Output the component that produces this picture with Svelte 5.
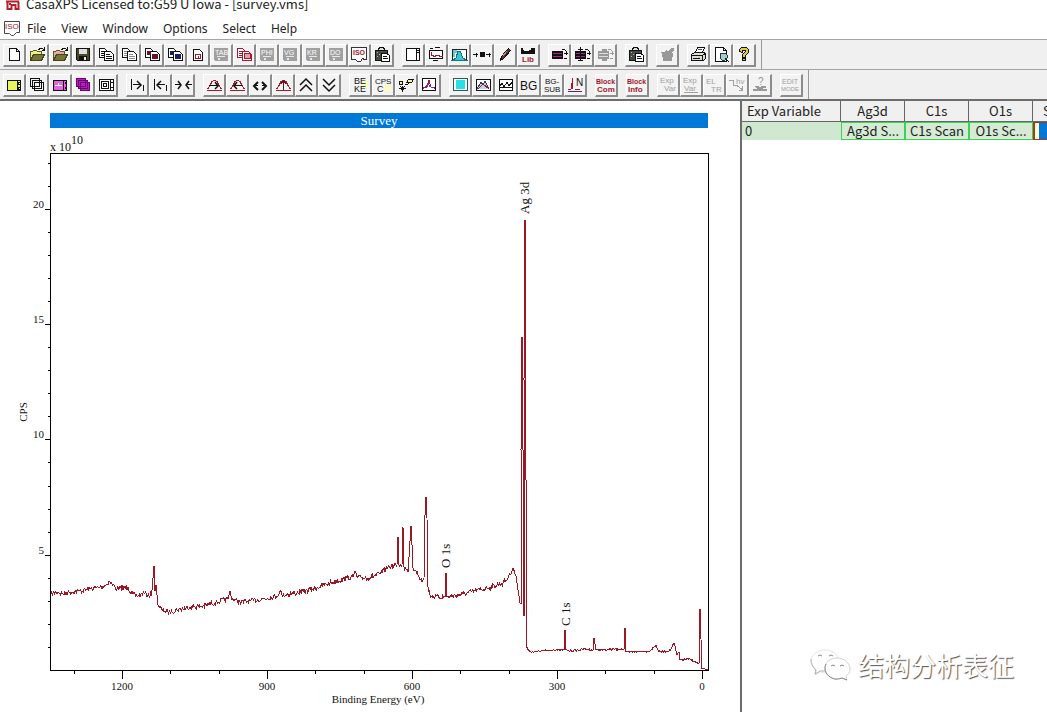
<!-- App.svelte -->
<script lang="ts">
    type Shape = [d: string, fill?: string, stroke?: string, width?: number];
    type Label = [x: number, y: number, text: string, color?: string, size?: number];
    type Tool = {
        name: string;
        shapes?: Shape[];
        labels?: Label[];
        disabled?: boolean;
    };

    const K = '#111';
    const G = '#a0a0a0';
    const R = '#a3182c';
    const M = '#c813c8';
    const C = '#25e0e8';

    const menus = ['File', 'View', 'Window', 'Options', 'Select', 'Help'];

    const pages = (fill: string, stroke = K): Shape[] => [
        ['M3.5 2.5h5l2 2v7h-7z', '#fff', stroke],
        ['M8.5 5.5h6l3 3v6h-9z', '#fff', stroke],
        ['M5 5h3v1h-3zM5 7h3v1h-3zM5 9h3v1h-3zM10 8h4v1h-4zM10 10h6v1h-6zM10 12h6v1h-6z', fill]
    ];
    const blocks = (fill: string): Shape[] => [
        ['M3.5 2.5h5l2 2v7h-7z', '#fff', K],
        ['M8.5 5.5h6l3 3v6h-9z', '#fff', K],
        ['M5 5h4v4h-4zM10 8h6v5h-6z', fill]
    ];
    const folder = (fill: string): Shape[] => [
        ['M3.5 13.5v-8h2l1-1h3l1 1h4v3', fill, '#5b5b20'],
        ['M3.5 14.5l3-6h11l-3 6z', '#77743a', '#45431c'],
        ['M11.5 3.5l2-1h2l2 2M17.5 1v4M15 4.5h3', 'none', K]
    ];
    const savedAs = (name: string, text: string): Tool => ({
        name,
        disabled: true,
        shapes: [['M3 2h14v13h-13l-1-1z', G], ['M6 10h8v1h-8zM7 12h2v2h-2z', '#e8e8e8']],
        labels: [[4, 9, text, '#fff', 7]]
    });
    const clipboard: Shape[] = [
        ['M3 4h12v10h-12z', '#444a40', K],
        ['M6 4v-2h1v-1h4v1h1v2z', '#ddd', K],
        ['M5 6h1v1h-1zM7 8h1v1h-1zM5 10h1v1h-1z', '#bbb'],
        ['M9.5 7.5h5l3 2v6h-8z', '#fff', K],
        ['M11 10h4v1h-4zM11 12h5v1h-5z', K]
    ];
    const film = (fill: string, edge = K): Shape[] => [
        ['M3 5h11v8h-11z', edge],
        ['M4 7h9v1h-9zM4 10h9v1h-9z', fill],
        ['M12.5 3.5h3l2 2v3M15 7.5h4M14.5 12.5h3', 'none', edge]
    ];
    const tile = (fill: string): Shape[] => [
        ['M3.5 4.5h13v10h-13z', fill, K],
        ['M13.5 4.5v10', 'none', K],
        ['M14 6h2v2h-2zM14 11h2v2h-2z', '#fff', K]
    ];
    const stack = (fill: string, edge: string): Shape[] => [
        ['M3.5 2.5h9v8h-9z', fill],
        ['M5.5 4.5h9v8h-9z', fill],
        ['M7.5 6.5h9v8h-9z', fill],
        ['M3.5 2.5h9v8h-9zM5.5 4.5h9v8h-9zM7.5 6.5h9v8h-9z', 'none', edge]
    ];

    const fileBar: Tool[][] = [
        [
            { name: 'New', shapes: [['M5.5 2.5h7l3 3v9h-10z', '#fff', K], ['M12.5 2.5v3h3', 'none', K]] },
            { name: 'Open', shapes: folder('#eeee8c') },
            { name: 'Convert', shapes: folder('#e4a9a9') },
            {
                name: 'Save',
                shapes: [
                    ['M3.5 2.5h13v12h-12l-1-1z', '#4b4a28', K],
                    ['M6 3h8v5h-8z', '#ddd'],
                    ['M6 10h8v4h-8z', '#111'],
                    ['M11 11h2v3h-2z', '#eee']
                ]
            },
            { name: 'Copy', shapes: pages(K) },
            { name: 'Copy text', shapes: pages('#888') },
            { name: 'Copy block', shapes: blocks('#611723') },
            { name: 'Copy tile', shapes: blocks('#15205f') },
            { name: 'Copy page', shapes: [['M5.5 3.5h6l3 3v8h-9z', '#fff', K], ['M7.5 8.5h5v4h-5zM9.5 10.5h1v1', 'none', R]] },
            savedAs('Save TAB', 'TAB'),
            { name: 'Copy table', shapes: [...pages(R, R), ['M10 7h6v5h-6z', '#dca0a8', R]] },
            savedAs('Save PHI', 'PHI'),
            savedAs('Save VG', 'VG'),
            savedAs('Save KR', 'KR'),
            savedAs('Save data', 'DO'),
            { name: 'ISO', shapes: [['M2.5 1.5h15v12h-2l-2-1-2 3h-3l-2-2h-4z', '#fff', '#333']], labels: [[4, 9, 'ISO', R, 7]] },
            { name: 'Paste', shapes: clipboard }
        ],
        [
            { name: 'Window', shapes: [['M3.5 2.5h13v12h-13z', '#fff', K], ['M13.5 2.5v12M13.5 6.5h3', 'none', K], ['M14 4h2v1h-2z', K]] },
            { name: 'Region view', shapes: [['M3.5 4.5h13v8h-13z', '#fff', K], ['M5.5 6v3l2 1h2l2-1h2v1h3', 'none', R], ['M4 2.5h3M9 1.5h5M7 14.5h5', 'none', K]] },
            { name: 'Peak fill', shapes: [['M3.5 3.5h14v11h-14z', '#fff', '#222'], ['M4 14l3-2 2-7h2l3 7 3 2z', '#3cc6d3', '#177'], ['M4 4h4v3h-2v4h-2z', '#67cbd7']] },
            { name: 'Step', shapes: [['M8 6h5v5h-5z', K], ['M1 8.5h5M4.5 6.5v4M14 8.5h5M17.5 6.5v4', 'none', K]] },
            { name: 'Edit', shapes: [['M13.5 2.5l2 2-7 8-3 2 1-4z', '#5c3030', K], ['M11.5 5.5l-4 5', 'none', '#c98080']] },
            { name: 'Library', shapes: [['M3 2h2v2h1v1h5v-1h2v-2h4v6h-14z', K], ['M3 7h14v1h-14z', K]], labels: [[4, 16, 'Lib', R, 8]] }
        ],
        [
            { name: 'Overlay', shapes: film('#a52b90') },
            { name: 'Overlay all', shapes: [...film('#a52b90'), ['M8.5 1v14M6 3.5h5M6 14.5h5', 'none', K]] },
            { name: 'Overlay off', disabled: true, shapes: [...film('#ddd', '#999'), ['M7 3h5v2h-5zM7 13h5v2h-5z', '#999']] }
        ],
        [{ name: 'Clipboard', shapes: clipboard }],
        [{ name: 'Bin', disabled: true, shapes: [['M5 7h11l-1 8h-9z', '#999'], ['M4 6h3l2-2 2 2 3-4h3v2l-2 3h-11z', '#999']] }],
        [
            {
                name: 'Print',
                shapes: [
                    ['M7.5 6.5l2-5h7l-2 5z', '#fff', K],
                    ['M3.5 8.5l3-2h10l1 2v4l-2 2h-12z', '#ddd', K],
                    ['M3.5 9.5h11v5M14.5 9.5l3-2M5 12.5h7', 'none', K],
                    ['M10 3h4v1h-4z', '#555'],
                    ['M10 11h2v1h-2z', '#cccb20']
                ]
            },
            {
                name: 'Print preview',
                shapes: [
                    ['M4.5 1.5h8l3 3v11h-11z', '#fff', K],
                    ['M12.5 1.5v3h3', 'none', K],
                    ['M10 7h4l2 2v3l-2 2h-3l-2-2v-3z', '#9ccfd5', '#333'],
                    ['M14 12l4 4', 'none', K]
                ]
            },
            {
                name: 'Help',
                shapes: [
                    ['M5.5 5.5v-2l2-2h5l2 2v3l-3 3v2h-3v-3l3-3v-1h-3v2z', '#dcd23b', K],
                    ['M8.5 12.5h3v2h-3z', '#dcd23b', K]
                ]
            }
        ]
    ];

    const hump = 'M3 12.5h1l2-3 2-4 2-1h1l2 1 2 4 2 3h1';
    const viewBar: Tool[][] = [
        [
            { name: 'One tile', shapes: tile('#eaf75c') },
            { name: 'Cascade', shapes: stack('none', K) },
            { name: 'Tile row', shapes: [['M3.5 4.5h13v10h-13z', '#e266e2', K], ['M13 5h1v9h-1zM15 6h1v2h-1zM15 11h1v2h-1z', K], ['M5 9h7v1h-7zM8 7h1v2h-1z', '#fff']] },
            { name: 'Stack', shapes: stack(M, '#5c0a6b') },
            { name: 'Nested', shapes: [['M3.5 3.5h14v11h-14z', '#fff', K], ['M5.5 5.5h7v7h-7zM7.5 7.5h3v3h-3zM14.5 4v10M15 6.5h2M15 11.5h2', 'none', K]] }
        ],
        [
            { name: 'Zoom right', shapes: [['M4.5 3v11M6 8.5h8M16.5 9v6', 'none', K], ['M10 5l4 4-4 4', 'none', K, 1.5]] },
            { name: 'Zoom left', shapes: [['M4.5 3v11M7 8.5h8M16.5 9v6', 'none', K], ['M11 5l-4 4 4 4', 'none', K, 1.5]] },
            { name: 'Zoom in', shapes: [['M2 8.5h6M19 8.5h-6', 'none', K], ['M5 5l3 4-3 4M16 5l-3 4 3 4', 'none', K, 1.5]] }
        ],
        [
            { name: 'Shift right', shapes: [[hump, 'none', R], ['M3 14.5h15', 'none', R], ['M5 9.5h9', 'none', K], ['M11 6l3 4-3 3', 'none', K, 1.5]] },
            { name: 'Shift left', shapes: [[hump, 'none', R], ['M3 14.5h15', 'none', R], ['M7 9.5h8', 'none', K], ['M10 6l-3 4 3 3', 'none', K, 1.5]] },
            { name: 'Widen', shapes: [['M8 6l-4 4 4 4M12 6l4 4-4 4', 'none', K, 2], ['M4 9.5h4M12 9.5h4', 'none', K]] },
            { name: 'Raise', shapes: [[hump, 'none', R], ['M3 14.5h15', 'none', R], ['M10.5 14v-9M7.5 8.5l3-4 3 4', 'none', '#641724']] },
            { name: 'Up', shapes: [['M4 9l6-6 6 6M4 15l6-6 6 6', 'none', K, 1.5]] },
            { name: 'Down', shapes: [['M4 3l6 6 6-6M4 9l6 6 6-6', 'none', K, 1.5]] }
        ],
        [
            { name: 'BE KE', shapes: [['M12 5h6v7h-6z', '#fbfac1']], labels: [[4, 8, 'BE', K, 9], [4, 16, 'KE', K, 9]] },
            { name: 'CPS', shapes: [['M11 9h7v6h-7z', '#fbfac1']], labels: [[2, 8, 'CPS', K, 8], [4, 16, 'C', K, 9]] },
            { name: 'Markers', shapes: [['M3.5 5.5h3v3h-3zM10.5 6.5l2-3h5l-2 3zM8.5 8.5h3l2-2', '#f6f3a2', K], ['M6.5 10v6M3 12.5h7M4.5 10.5l4 4M8.5 10.5l-4 4', 'none', K]] },
            { name: 'Peaks', shapes: [['M3.5 2.5h13v12h-13z', '#fff', K], ['M4 12l4-1 2-7 2 7 4 1', 'none', R], ['M4 12.5l3-2 2-3 2 3 5 2', 'none', '#6838a0']] }
        ],
        [
            { name: 'Display', shapes: [['M3.5 2.5h14v12h-14z', '#fff', '#265b5b'], ['M6 4h9v9h-9z', C]] },
            { name: 'Overlay peaks', shapes: [['M3.5 3.5h14v11h-14z', '#fff', K], ['M4 13l4-7 2 3 2-4 4 8', '#bcdadf', '#273b70'], ['M5 13l5-5 6 5', 'none', R]] },
            { name: 'Noise', shapes: [['M3.5 3.5h13v11h-13z', '#fff', K], ['M4 9.5l2-2 2 3 3-4 2 3 3-3M4 11.5h12', 'none', K]] },
            { name: 'BG', labels: [[1, 14, 'BG', K, 12]] },
            { name: 'BG-SUB', labels: [[3, 8, 'BG-', K, 8], [2, 16, 'SUB', K, 8]] },
            { name: 'Normalise', shapes: [['M3 15.5h14', 'none', '#4b287d'], ['M3 13.5h3M7.5 13v-11M6.5 13v-6M9.5 13.5h5', 'none', R]], labels: [[11, 10, 'N', K, 10]] }
        ],
        [{ name: 'Block Com', labels: [[0, 8, 'Block', R, 7], [1, 16, 'Com', R, 8]] }],
        [{ name: 'Block Info', labels: [[0, 8, 'Block', R, 7], [1, 16, 'Info', R, 8]] }],
        [
            { name: 'Exp Var', disabled: true, labels: [[2, 7, 'Exp', G, 8], [6, 15, 'Var', G, 8]] },
            { name: 'Exp Var line', disabled: true, shapes: [['M3 16.5h14', 'none', G]], labels: [[2, 7, 'Exp', G, 8], [3, 15, 'Var', G, 8]] },
            { name: 'EL TR', disabled: true, labels: [[2, 8, 'EL', G, 8], [7, 16, 'TR', G, 8]] },
            { name: 'hv', disabled: true, shapes: [['M2 4.5h4v5h4l5 4M15.5 10v4h-4', 'none', G]], labels: [[9, 8, 'hv', G, 8]] },
            { name: 'Query', disabled: true, shapes: [['M4 10h4l2 1 2-1h4v2h-3v1h4v2h-14v-2h4v-1h-1z', '#999']], labels: [[8, 9, '?', '#999', 10]] }
        ],
        [{ name: 'Edit mode', disabled: true, labels: [[1, 8, 'EDIT', G, 7], [0, 15, 'MODE', G, 6]] }]
    ];

    // plot frame, in drawing units
    const frame = { left: 50, right: 708, top: 153, bottom: 670 };

    const xOf = (ev: number) => Math.round(702 - ev * 0.4833);
    const yOf = (cps: number) => Math.round(670 - cps * 23.06);

    const xTicks = Array.from({ length: 14 }, (_, i) => i * 100);
    const yTicks = Array.from({ length: 22 }, (_, i) => i + 1);

    const trace: [number, number][] = [
        [51, 594], [58, 592], [62, 594], [70, 592], [80, 591], [90, 589], [100, 587], [106, 585], [109, 581],
        [112, 584], [117, 589], [128, 587], [132, 594], [137, 596], [145, 593], [150, 596], [152, 590], [154, 566],
        [155, 591], [156, 585], [158, 605], [162, 610], [168, 612], [177, 610], [190, 607], [203, 606], [217, 602],
        [228, 599], [230, 591], [232, 599], [240, 602], [250, 601], [263, 599], [277, 596], [280, 591], [282, 595],
        [297, 593], [313, 589], [330, 583], [347, 578], [353, 577], [355, 571], [357, 577], [368, 578], [380, 574],
        [388, 567], [397, 565], [398, 537], [399, 565], [402, 565], [403, 527], [404, 567], [408, 572], [409, 557],
        [411, 526], [412, 545], [413, 568], [417, 571], [422, 582], [424, 578], [425, 515], [426, 497], [427, 518],
        [428, 587], [430, 595], [435, 597], [445, 597], [446, 573], [447, 597], [463, 594], [487, 588], [503, 583],
        [508, 578], [513, 568], [516, 576], [520, 603], [521, 603], [521, 450], [522, 337], [523, 450], [523, 615],
        [524, 615], [524, 380], [525, 220], [526, 480], [526, 645], [528, 650], [531, 652], [553, 650], [564, 650],
        [565, 630], [566, 650], [570, 651], [587, 649], [593, 650], [594, 638], [596, 650], [624, 649], [625, 628],
        [626, 652], [650, 651], [656, 645], [659, 652], [670, 651], [674, 643], [677, 655], [679, 652], [680, 660],
        [690, 659], [699, 664], [700, 609], [702, 669], [708, 670]
    ];

    // adds counting noise along the flat parts and leaves the steep flanks clean
    function withNoise(points: [number, number][]) {
        let seed = 7;
        const random = () => {
            seed = (seed * 16807) % 2147483647;
            return seed / 2147483647 - 0.5;
        };
        const out: string[] = [];
        points.forEach(([x, y], i) => {
            out.push(`${x},${y}`);
            const next = points[i + 1];
            if (!next || Math.abs(next[1] - y) > 12) return;
            const amp = x > 527 ? 1.8 : 5;
            for (let px = x + 0.7; px < next[0] - 0.4; px += 0.7) {
                const base = y + ((next[1] - y) * (px - x)) / (next[0] - x);
                out.push(`${px.toFixed(1)},${(base + random() * amp).toFixed(1)}`);
            }
        });
        return out.join(' ');
    }

    const tracePoints = withNoise(trace);

    const peaks = [
        { label: 'Ag 3d', x: 529, y: 214 },
        { label: 'O 1s', x: 450, y: 568 },
        { label: 'C 1s', x: 570, y: 626 }
    ];

    const columns = ['Ag3d', 'C1s', 'O1s', 'Survey'];
    const scans = ['Ag3d S...', 'C1s Scan', 'O1s Sc...'];
</script>

{#snippet toolbar(groups: Tool[][], label: string)}
    <div class="toolbar" role="toolbar" aria-label={label}>
        {#each groups as group}
            <div class="group">
                {#each group as tool}
                    <button type="button" class="tool" aria-label={tool.name} disabled={tool.disabled}>
                        <svg viewBox="0 0 20 18" width="20" height="18">
                            {#each tool.shapes ?? [] as [d, fill, stroke, width]}
                                <path
                                    {d}
                                    fill={fill ?? 'none'}
                                    stroke={stroke ?? 'none'}
                                    stroke-width={width ?? 1}
                                    shape-rendering={width ? 'auto' : 'crispEdges'}
                                />
                            {/each}
                            {#each tool.labels ?? [] as [x, y, text, color, size]}
                                <text {x} {y} fill={color} font-size={size} class:strong={color === R}>{text}</text>
                            {/each}
                        </svg>
                    </button>
                {/each}
            </div>
        {/each}
    </div>
{/snippet}

<div class="window">
    <header class="title-bar">
        <svg class="app-icon" viewBox="0 0 16 18" width="16" height="18">
            <path d="M2 6.5h13M3.5 7v7h4v-4h4v4h3v-7M6 8v2" fill="none" stroke="#b3202c" stroke-width="2" />
        </svg>
        <span>CasaXPS Licensed to:G59 U Iowa - [survey.vms]</span>
    </header>

    <nav class="menu-bar">
        <svg class="doc-icon" viewBox="0 0 16 17" width="16" height="17">
            <path d="M.5 1.5h15v11h-3l-3 3h-2l-2-2h-5z" fill="#fff" stroke="#444" />
            <text x="1" y="9" font-size="8" fill="#a3182c">ISO</text>
        </svg>
        {#each menus as menu}
            <button type="button" class="menu">{menu}</button>
        {/each}
    </nav>

    {@render toolbar(fileBar, 'File')}
    {@render toolbar(viewBar, 'View')}

    <main class="panes">
        <section class="plot">
            <svg viewBox="0 101 740 611" role="img" aria-label="Survey spectrum">
                <rect x="50" y="113" width="658" height="15" fill="#0078d7" />
                <text class="plot-title" x="379" y="125" text-anchor="middle">Survey</text>

                <text class="scale-label" x="50" y="151">x 10</text>
                <text class="scale-label" x="71" y="144">10</text>

                <g class="axis">
                    <rect
                        x={frame.left + 0.5}
                        y={frame.top + 0.5}
                        width={frame.right - frame.left}
                        height={frame.bottom - frame.top}
                    />
                    {#each xTicks as ev}
                        <path d="M{xOf(ev) + 0.5} {frame.bottom}v{ev % 300 === 0 ? 9 : 4}" />
                    {/each}
                    {#each yTicks as cps}
                        <path d="M{frame.left} {yOf(cps) + 0.5}h{cps % 5 === 0 ? -5 : -2}" />
                    {/each}
                </g>

                {#each xTicks.filter((ev) => ev % 300 === 0) as ev}
                    <text class="tick-label" x={xOf(ev)} y="690" text-anchor="middle">{ev}</text>
                {/each}
                {#each yTicks.filter((cps) => cps % 5 === 0) as cps}
                    <text class="tick-label" x="44" y={yOf(cps) - 1} text-anchor="end">{cps}</text>
                {/each}

                <text class="tick-label" x="378" y="703" text-anchor="middle">Binding Energy (eV)</text>
                <text class="tick-label" transform="translate(27 412) rotate(-90)" text-anchor="middle">CPS</text>

                <polyline class="trace" points={tracePoints} />

                {#each peaks as peak}
                    <text class="peak-label" transform="translate({peak.x} {peak.y}) rotate(-90)">{peak.label}</text>
                {/each}
            </svg>
        </section>

        <section class="browser">
            <table>
                <thead>
                    <tr>
                        <th class="variable">Exp Variable</th>
                        {#each columns as column, i}
                            <th class:clipped={i === columns.length - 1}>{column}</th>
                        {/each}
                    </tr>
                </thead>
                <tbody>
                    <tr>
                        <td class="variable">0</td>
                        {#each scans as scan}
                            <td class="scan">{scan}</td>
                        {/each}
                        <td class="scan selected"></td>
                    </tr>
                </tbody>
            </table>

            <div class="watermark">
                <svg viewBox="0 0 44 36" width="44" height="36">
                    <g fill="#fff" stroke="#b0b0b0">
                        <path d="M3 15C3 8 9 3 17 3s14 5 14 11-6 12-14 12l-5-1-5 3 1-5c-3-2-5-5-5-8z" stroke="#e6e6e6" />
                        <path d="M3 12c0 5 2 8 5 11l-1 4 5-3h5" fill="none" />
                        <path d="M17 21c0-6 5-10 12-10s13 5 13 11c0 3-2 6-4 7l1 4-5-2-5 1c-7 0-12-5-12-11z" stroke="#d2d2d2" />
                        <path d="M18 17c-3 6 1 12 6 14 4 2 7 1 10 0l5 2" fill="none" stroke="#888" />
                    </g>
                    <path d="M10 9q2-2 4 0M21 9q2-2 4 0M23 19q2-2 4 0M32 19q2-2 4 0" fill="none" stroke="#888" />
                </svg>
                <span>结构分析表征</span>
            </div>
        </section>
    </main>
</div>

<style>
    :global(body) {
        background: #fff;
        overflow: hidden;
    }

    .window {
        min-height: 100vh;
        display: flex;
        flex-direction: column;
        font-family: "Noto Sans CJK SC", "Noto Sans", sans-serif;
        font-size: 13px;
        color: #222;
    }

    .title-bar {
        display: flex;
        align-items: center;
        gap: 6px;
        height: 18px;
        margin-top: -5px;
        padding-left: 4px;
        line-height: 18px;
    }

    .menu-bar {
        display: flex;
        align-items: center;
        gap: 15px;
        height: 21px;
        padding: 5px 0 0 4px;
        font-family: "Noto Sans", sans-serif;
        font-size: 12px;
    }

    .doc-icon {
        margin-right: -8px;
    }

    .menu {
        padding: 0;
        border: none;
        background: none;
        font: inherit;
        line-height: 20px;
        color: inherit;
    }

    .toolbar {
        display: flex;
        gap: 8px;
        box-sizing: border-box;
        height: 30px;
        padding: 4px 0 0 3px;
        border-top: 1px solid #a5a5a5;
        background: #f0f0f0;
    }

    .group {
        display: flex;
    }

    .group:last-child {
        margin-top: -4px;
        padding: 4px 5px 0 0;
        border-right: 1px solid #999;
    }

    .tool {
        width: 23px;
        height: 23px;
        box-sizing: border-box;
        padding: 0;
        border: solid;
        border-width: 1px 2px 2px 1px;
        border-color: #fff #8c8c8c #8c8c8c #fff;
        background: #f3f3f3;
    }

    .tool svg {
        display: block;
        font-family: "Liberation Sans", Arial, sans-serif;
    }

    .strong {
        font-weight: 700;
    }

    .doc-icon text {
        font-family: "Liberation Sans", Arial, sans-serif;
    }

    .panes {
        flex: 1;
        display: grid;
        grid-template-columns: minmax(0, 1fr) 307px;
        border-top: 2px solid #6c6c6c;
    }

    .plot svg {
        display: block;
        width: 100%;
        font-family: "Liberation Serif", "Times New Roman", serif;
    }

    .plot-title {
        font-size: 13px;
        fill: #fff;
    }

    .scale-label {
        font-size: 12px;
        fill: #111;
    }

    .tick-label {
        font-size: 11px;
        fill: #111;
    }

    .peak-label {
        font-size: 13px;
        fill: #111;
    }

    .axis {
        fill: none;
        stroke: #000;
        shape-rendering: crispEdges;
    }

    .trace {
        fill: none;
        stroke: #9c1722;
        shape-rendering: crispEdges;
    }

    .browser {
        position: relative;
        overflow: hidden;
        border-left: 2px solid #6c6c6c;
    }

    table {
        width: 355px;
        table-layout: fixed;
        border-collapse: separate;
        border-spacing: 0;
    }

    th,
    td {
        box-sizing: border-box;
        padding: 0;
        font-weight: 400;
        text-align: center;
        white-space: nowrap;
        overflow: hidden;
    }

    th {
        height: 21px;
        line-height: 20px;
        border-right: 1px solid #666;
        border-bottom: 1px solid #666;
        background: #f0f0f0;
    }

    td {
        height: 18px;
        line-height: 16px;
    }

    .variable {
        width: 99px;
        padding-left: 5px;
        text-align: left;
    }

    td.variable {
        padding-left: 3px;
        background: #d0e8cf;
    }

    .clipped {
        padding-left: 10px;
        text-align: left;
    }

    .scan {
        border: 1px solid #3bd353;
        background: #d6ead5;
    }

    .scan.selected {
        border-color: #a33b20;
        border-left: 2px solid #a33b20;
        background: linear-gradient(to right, #fffbd6 4px, #0078d7 4px);
    }

    .watermark {
        position: absolute;
        right: 33px;
        bottom: 28px;
        display: flex;
        align-items: center;
        gap: 6px;
        font-family: "Noto Sans CJK SC", sans-serif;
        font-size: 26px;
        line-height: 38px;
        color: #fff;
        text-shadow: 1px 1px 1px #555;
    }
</style>
